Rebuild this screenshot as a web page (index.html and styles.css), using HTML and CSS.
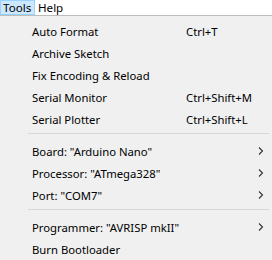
FILE: index.html
```html
<!DOCTYPE html>
<html>
<head>
<meta charset="utf-8">
<link rel="stylesheet" href="styles.css">
</head>
<body>
<div class="menubar">
  <span class="top active">Tools</span>
  <span class="top">Help</span>
</div>
<div class="dropdown">
  <div class="item"><span class="label">Auto Format</span><span class="key">Ctrl+T</span><span class="arrow"></span></div>
  <div class="item"><span class="label">Archive Sketch</span><span class="key"></span><span class="arrow"></span></div>
  <div class="item"><span class="label">Fix Encoding &amp; Reload</span><span class="key"></span><span class="arrow"></span></div>
  <div class="item"><span class="label">Serial Monitor</span><span class="key">Ctrl+Shift+M</span><span class="arrow"></span></div>
  <div class="item"><span class="label">Serial Plotter</span><span class="key">Ctrl+Shift+L</span><span class="arrow"></span></div>
  <div class="sep"></div>
  <div class="item"><span class="label">Board: "Arduino Nano"</span><span class="key"></span><span class="arrow"><svg width="6" height="8" viewBox="0 0 6 8"><path d="M1 0.5 L4.5 4 L1 7.5" fill="none" stroke="#333" stroke-width="1.1"/></svg></span></div>
  <div class="item"><span class="label">Processor: "ATmega328"</span><span class="key"></span><span class="arrow"><svg width="6" height="8" viewBox="0 0 6 8"><path d="M1 0.5 L4.5 4 L1 7.5" fill="none" stroke="#333" stroke-width="1.1"/></svg></span></div>
  <div class="item"><span class="label">Port: "COM7"</span><span class="key"></span><span class="arrow"><svg width="6" height="8" viewBox="0 0 6 8"><path d="M1 0.5 L4.5 4 L1 7.5" fill="none" stroke="#333" stroke-width="1.1"/></svg></span></div>
  <div class="sep"></div>
  <div class="item"><span class="label">Programmer: "AVRISP mkII"</span><span class="key"></span><span class="arrow"><svg width="6" height="8" viewBox="0 0 6 8"><path d="M1 0.5 L4.5 4 L1 7.5" fill="none" stroke="#333" stroke-width="1.1"/></svg></span></div>
  <div class="item"><span class="label">Burn Bootloader</span><span class="key"></span><span class="arrow"></span></div>
</div>
</body>
</html>
```
FILE: styles.css
```css
html, body {
  margin: 0;
  padding: 0;
  background: #f0f0f0;
  font-family: "Noto Sans", "Open Sans", sans-serif;
  font-size: 11.3px;
  color: #000;
  overflow: hidden;
}
.menubar {
  height: 15px;
  background: #fff;
  display: flex;
  border-bottom: 1px solid #bcbcbc;
  font-size: 11.6px;
}
.top {
  height: 15px;
  line-height: 13px;
  padding: 0 5px 0 2px;
  box-sizing: border-box;
  border: 1px solid transparent;
}
.top.active {
  background: #cce8ff;
  border-color: #99d1ff;
  width: 35px;
}
.dropdown {
  padding-top: 4px;
}
.item {
  height: 22px;
  display: flex;
  align-items: center;
  padding-left: 32px;
  white-space: nowrap;
}
.label {
  flex: 1;
}
.key {
  width: 72px;
}
.arrow {
  width: 14px;
  display: flex;
  align-items: center;
}
.sep {
  height: 1px;
  margin: 3px 3px 6px 28px;
  background: #d7d7d7;
}
```
